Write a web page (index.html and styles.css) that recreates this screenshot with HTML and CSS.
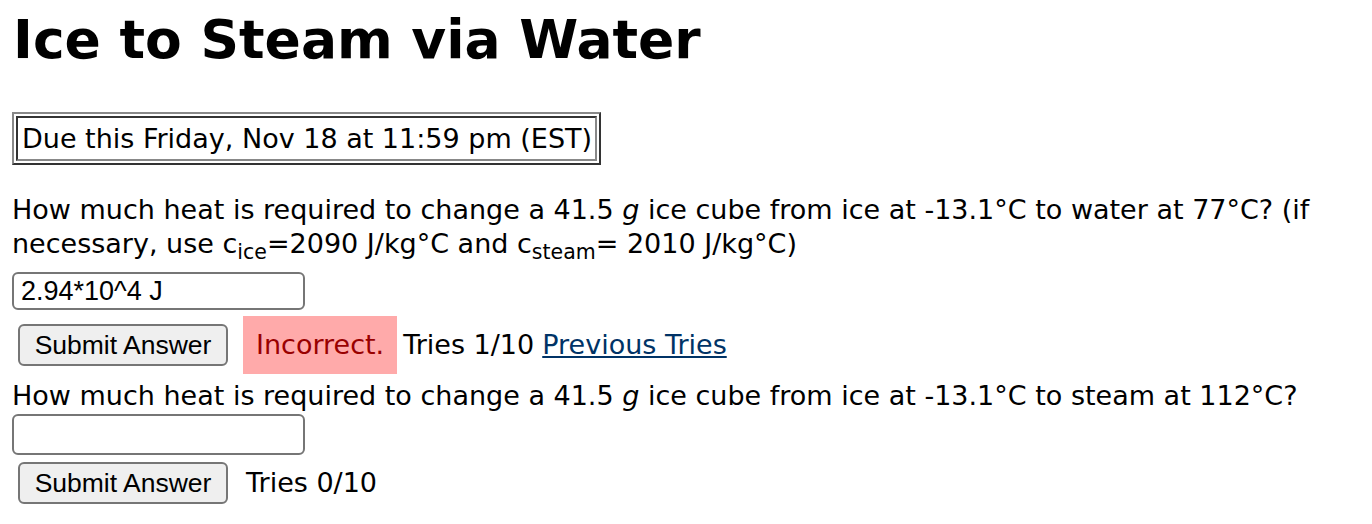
FILE: index.html
```html
<!DOCTYPE html>
<html>
<head>
<meta charset="utf-8">
<title>Ice to Steam via Water</title>
<link rel="stylesheet" href="styles.css">
</head>
<body>
<h1 class="title">Ice to Steam via Water</h1>

<table class="due">
  <tr><td>Due this Friday, Nov 18 at 11:59 pm (EST)</td></tr>
</table>

<div class="part first">
  <p class="question">How much heat is required to change a 41.5 <i>g</i> ice cube from ice at -13.1°C to water at 77°C? (if necessary, use c<sub>ice</sub>=2090 J/kg°C and c<sub>steam</sub>= 2010 J/kg°C)</p>
  <input class="answer" type="text" value="2.94*10^4 J">
  <div class="submit-row">
    <button class="btn">Submit Answer</button>
    <span class="incorrect">Incorrect.</span>
    <span class="tries">Tries 1/10</span>
    <a class="prev" href="#">Previous Tries</a>
  </div>
</div>

<div class="part second">
  <p class="question">How much heat is required to change a 41.5 <i>g</i> ice cube from ice at -13.1°C to steam at 112°C?</p>
  <input class="answer" type="text" value="">
  <div class="submit-row">
    <button class="btn">Submit Answer</button>
    <span class="tries wide">Tries 0/10</span>
  </div>
</div>
</body>
</html>
```

FILE: styles.css
```css
body{
  margin:0 12px;
  background:#fff;
  color:#000;
  font-family:"DejaVu Sans",Verdana,sans-serif;
  font-size:27px;
  line-height:32px;
}
.title{
  font-size:53.5px;
  line-height:64px;
  font-weight:bold;
  margin:8px 0 40px 1px;
}
.due{
  border:2px solid;
  border-color:#888 #333 #333 #888;
  border-spacing:2px;
}
.due td{
  border:2px solid;
  border-color:#333 #888 #888 #333;
  padding:5px 3px 4px 4px;
  line-height:32px;
}
.question{
  margin:0;
  line-height:34px;
}
.first .question{
  margin-top:28px;
}
.question sub{
  font-size:20.5px;
  line-height:0;
}
.answer{
  display:block;
  box-sizing:border-box;
  width:293px;
  height:38px;
  margin:11px 0 0 0;
  padding:0 7px;
  border:2px solid #767676;
  border-radius:6px;
  font-family:"Liberation Sans",Arial,sans-serif;
  font-size:27px;
  color:#000;
  background:#fff;
}
.submit-row{
  display:flex;
  align-items:center;
  height:58px;
  margin-top:6px;
}
.btn{
  box-sizing:border-box;
  width:210px;
  height:42px;
  margin:0 15px 0 6px;
  padding:0;
  background:#efefef;
  border:2px solid #767676;
  border-radius:6px;
  font-family:"Liberation Sans",Arial,sans-serif;
  font-size:26.5px;
  color:#000;
}
.incorrect{
  background:#ffaaaa;
  color:#990000;
  padding:0 13px;
  line-height:58px;
}
.tries{
  margin-left:6px;
}
.tries.wide{
  margin-left:3px;
}
.prev{
  margin-left:8px;
  color:#003366;
  text-decoration:underline;
}
.second .question{
  margin-top:5px;
}
.second .answer{
  margin-top:1px;
  height:41px;
}
.second .submit-row{
  height:44px;
  margin-top:6px;
}
```
